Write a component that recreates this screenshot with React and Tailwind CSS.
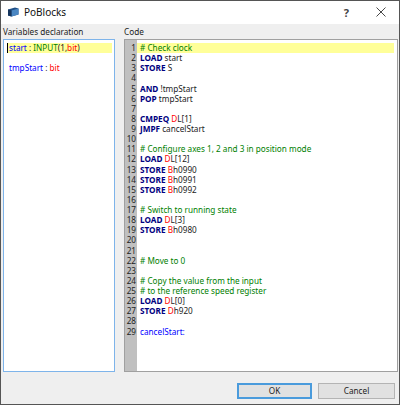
import React from "react";

const K = ({ children }) => <span className="font-bold text-[#000080]">{children}</span>;
const C = ({ children }) => <span className="text-[#008000]">{children}</span>;
const R = ({ children }) => <span className="text-[#ff0000]">{children}</span>;
const B = ({ children }) => <span className="text-[#0000ff]">{children}</span>;

const lines = [
  <C># Check clock</C>,
  <><K>LOAD</K> start</>,
  <><K>STORE</K> S</>,
  null,
  <><K>AND</K> !tmpStart</>,
  <><K>POP</K> tmpStart</>,
  null,
  <><K>CMPEQ</K> <R>D</R>L[1]</>,
  <><K>JMPF</K> cancelStart</>,
  null,
  <C># Configure axes 1, 2 and 3 in position mode</C>,
  <><K>LOAD</K> <R>D</R>L[12]</>,
  <><K>STORE</K> <R>B</R>h0990</>,
  <><K>STORE</K> <R>B</R>h0991</>,
  <><K>STORE</K> <R>B</R>h0992</>,
  null,
  <C># Switch to running state</C>,
  <><K>LOAD</K> <R>D</R>L[3]</>,
  <><K>STORE</K> <R>B</R>h0980</>,
  null,
  null,
  <C># Move to 0</C>,
  null,
  <C># Copy the value from the input</C>,
  <C># to the reference speed register</C>,
  <><K>LOAD</K> <R>D</R>L[0]</>,
  <><K>STORE</K> <R>D</R>h920</>,
  null,
  <B>cancelStart:</B>,
];

export default function App() {
  return (
    <div className="w-[400px] h-[405px] flex flex-col border border-[#555555] bg-[#efefef] text-[8.2px] leading-[10.14px] text-[#222222] [font-family:'Noto_Sans',sans-serif] overflow-hidden">
      <div className="h-[23px] shrink-0 bg-white flex items-center pl-[7px] pr-[12px] pb-[1px]">
        <svg width="11" height="10" viewBox="0 0 11 10" className="mr-[5px]">
          <path d="M0 2.5 L7 0.5 L10.5 1.5 L10.5 7.5 L3.5 9.5 L0 8.5 Z" fill="#1f4f86" />
          <path d="M3.5 3.5 L10.5 1.5 L10.5 7.5 L3.5 9.5 Z" fill="#4a86c2" />
          <path d="M0 2.5 L3.5 3.5 L3.5 9.5 L0 8.5 Z" fill="#16365e" />
        </svg>
        <span className="text-[10px] text-[#111111] leading-none">PoBlocks</span>
        <span className="ml-auto text-[11px] font-bold text-[#444444] leading-none mr-[27px]">?</span>
        <svg width="10" height="10" viewBox="0 0 10 10" stroke="#333333" strokeWidth="0.9" className="mr-[1px]">
          <path d="M0.5 0.5 L9.5 9.5 M9.5 0.5 L0.5 9.5" />
        </svg>
      </div>

      <div className="flex flex-1 min-h-0 pl-[2px] pr-[1px] gap-[9px]">
        <div className="w-[112px] flex flex-col shrink-0">
          <div className="h-[15px] pt-[3px] leading-[10px]">Variables declaration</div>
          <div className="h-[333px] bg-white border border-[#7eb4ea] pt-[3px] pl-[3px] pr-[2px]">
            <div className="h-[10.14px] bg-[#ffff99] pl-[1px] border-l border-l-black whitespace-nowrap">
              <B>start</B> : <C>INPUT</C>(1,<R>bit</R>)
            </div>
            <div className="h-[10.14px]" />
            <div className="h-[10.14px] pl-[2px] whitespace-nowrap">
              <B>tmpStart</B> : <R>bit</R>
            </div>
          </div>
        </div>

        <div className="w-[274px] flex flex-col shrink-0">
          <div className="h-[15px] pt-[3px] leading-[10px]">Code</div>
          <div className="h-[333px] flex bg-white border border-[#a0a0a0]">
            <div className="w-[12px] shrink-0 bg-[#c0c0c0] pt-[3px] text-right">
              {lines.map((_, i) => (
                <div key={i} className="h-[10.14px] pr-[1px]">{i + 1}</div>
              ))}
            </div>
            <div className="flex-1 pt-[3px] pr-[3px] min-w-0">
              {lines.map((l, i) => (
                <div key={i} className={`h-[10.14px] pl-[3px] whitespace-nowrap ${i === 0 ? "bg-[#ffff99]" : ""}`}>{l}</div>
              ))}
            </div>
          </div>
        </div>
      </div>

      <div className="h-[32px] shrink-0 flex items-start justify-end gap-[6px] pt-[11px] pr-[4px]">
        <button className="w-[75px] h-[16px] bg-[#e1e1e1] border-2 border-[#4a9bdc] leading-none">OK</button>
        <button className="w-[77px] h-[16px] bg-[#e1e1e1] border border-[#b4b4b4] leading-none">Cancel</button>
      </div>
    </div>
  );
}
